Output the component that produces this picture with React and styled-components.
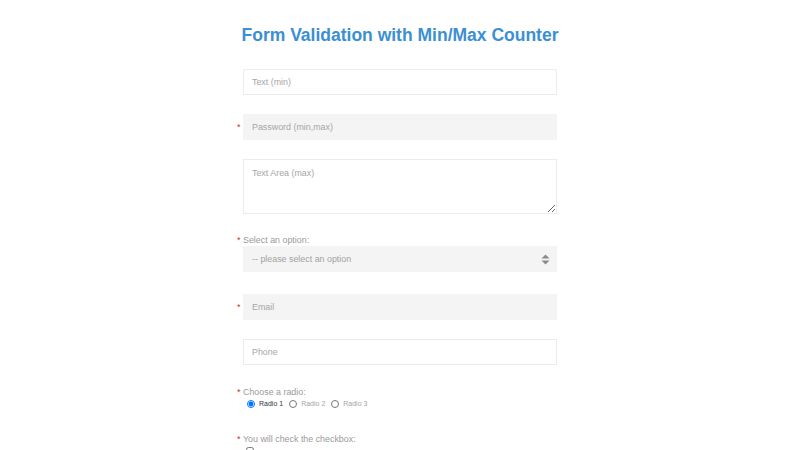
import React from "react";
import styled, { createGlobalStyle } from "styled-components";

const Global = createGlobalStyle`
  html, body { margin: 0; padding: 0; background: #fff; }
  body { font-family: "Liberation Sans", Arial, sans-serif; }
  * { box-sizing: border-box; }
`;

const Page = styled.div`
  padding-top: 25px;
`;

const Title = styled.h1`
  margin: 0 0 24px;
  text-align: center;
  font-size: 17.5px;
  line-height: 20px;
  font-weight: 700;
  color: #3b8fd3;
`;

const Form = styled.form`
  width: 314px;
  margin: 0 auto;
  display: flex;
  flex-direction: column;
`;

const Field = styled.div`
  position: relative;
  margin-bottom: ${(p) => p.$mb ?? 19}px;
`;

const Star = styled.span`
  position: absolute;
  left: -6px;
  top: ${(p) => p.$top ?? 9}px;
  font-size: 9px;
  line-height: 9px;
  color: #c0392b;
`;

const baseControl = `
  display: block;
  width: 100%;
  font-family: "Liberation Sans", Arial, sans-serif;
  font-size: 8.9px;
  color: #555;
  outline: none;
  border-radius: 0;
`;

const Input = styled.input`
  ${baseControl}
  height: 26px;
  padding: 0 8px;
  border: 1px solid ${(p) => (p.$filled ? "#f4f4f4" : "#ececec")};
  background: ${(p) => (p.$filled ? "#f4f4f4" : "#fff")};
  &::placeholder { color: #a6a6a6; }
`;

const TextArea = styled.textarea`
  ${baseControl}
  height: 55px;
  padding: 8px;
  border: 1px solid #ececec;
  background: #fff;
  resize: vertical;
  &::placeholder { color: #a6a6a6; }
`;

const Label = styled.div`
  font-size: 8.9px;
  line-height: 12px;
  color: #9a9a9a;
`;

const SelectWrap = styled.div`
  position: relative;
`;

const Select = styled.select`
  ${baseControl}
  appearance: none;
  height: 26px;
  padding: 0 8px;
  border: 1px solid #f4f4f4;
  background: #f4f4f4;
  color: #a2a2a2;
`;

const Arrows = styled.svg`
  position: absolute;
  right: 7px;
  top: 8px;
  pointer-events: none;
`;

const RadioRow = styled.div`
  display: flex;
  align-items: center;
  height: 13px;
  padding-left: 4px;
  padding-bottom: 2px;
`;

const RadioLabel = styled.label`
  display: flex;
  align-items: center;
  font-size: 7px;
  color: ${(p) => (p.$active ? "#333" : "#a5a5a5")};
  margin-right: 6px;
`;

const Radio = styled.input`
  width: 8px;
  height: 8px;
  margin: 0 4px 0 0;
`;

const Check = styled.input`
  width: 8px;
  height: 8px;
  margin: 2px 0 0 3px;
  display: block;
`;

export default function App() {
  return (
    <>
      <Global />
      <Page>
        <Title>Form Validation with Min/Max Counter</Title>
        <Form onSubmit={(e) => e.preventDefault()}>
          <Field>
            <Input placeholder="Text (min)" />
          </Field>
          <Field>
            <Star>*</Star>
            <Input $filled type="password" placeholder="Password (min,max)" />
          </Field>
          <Field $mb={20}>
            <TextArea placeholder="Text Area (max)" />
          </Field>
          <Field $mb={22}>
            <Star $top={2}>*</Star>
            <Label>Select an option:</Label>
            <SelectWrap>
              <Select defaultValue="">
                <option value="">-- please select an option</option>
                <option value="1">Option 1</option>
              </Select>
              <Arrows width="9" height="11" viewBox="0 0 9 11">
                <path d="M4.5 0.5 L8.5 4.5 L0.5 4.5 Z" fill="#8a8a8a" />
                <path d="M0.5 6.5 L8.5 6.5 L4.5 10.5 Z" fill="#8a8a8a" />
              </Arrows>
            </SelectWrap>
          </Field>
          <Field>
            <Star>*</Star>
            <Input $filled type="email" placeholder="Email" />
          </Field>
          <Field $mb={21}>
            <Input type="tel" placeholder="Phone" />
          </Field>
          <Field $mb={22}>
            <Star $top={2}>*</Star>
            <Label>Choose a radio:</Label>
            <RadioRow>
              <RadioLabel $active>
                <Radio type="radio" name="r" defaultChecked />
                Radio 1
              </RadioLabel>
              <RadioLabel>
                <Radio type="radio" name="r" />
                Radio 2
              </RadioLabel>
              <RadioLabel>
                <Radio type="radio" name="r" />
                Radio 3
              </RadioLabel>
            </RadioRow>
          </Field>
          <Field>
            <Star $top={2}>*</Star>
            <Label>You will check the checkbox:</Label>
            <Check type="checkbox" />
          </Field>
        </Form>
      </Page>
    </>
  );
}
